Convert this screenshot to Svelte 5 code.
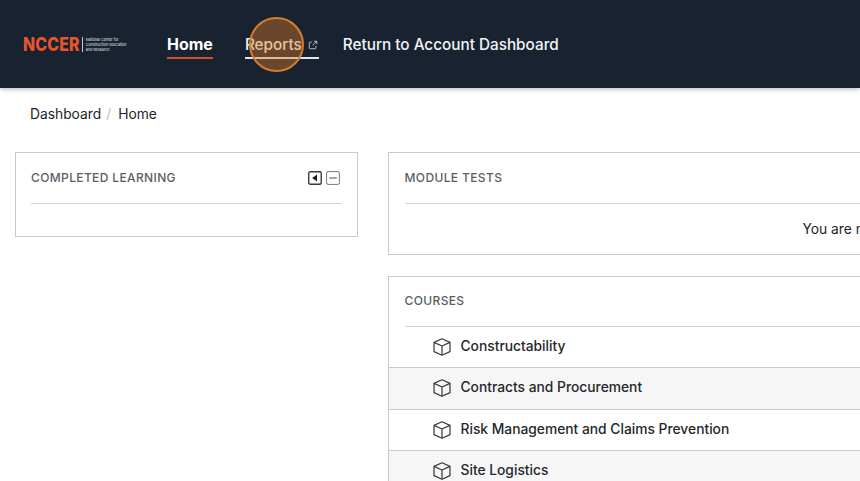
<script lang="ts">
  const courses = [
    "Constructability",
    "Contracts and Procurement",
    "Risk Management and Claims Prevention",
    "Site Logistics",
  ];
</script>

<div class="page">
  <header class="topbar">
    <a class="logo" href="#top">
      <span class="logo-mark"><span class="logo-word">NCCER</span></span>
      <span class="logo-text">National Center for<br />Construction Education<br />and Research</span>
    </a>
    <nav class="nav">
      <a class="nav-link active" href="#home">Home</a>
      <a class="nav-link reports" href="#reports">
        Reports
        <svg class="ext" viewBox="0 0 12 12" width="10" height="10" fill="none" stroke="currentColor" stroke-width="1">
          <path d="M9.5 7v2.5a1 1 0 0 1-1 1h-6a1 1 0 0 1-1-1v-6a1 1 0 0 1 1-1H5" />
          <path d="M7 1.5h3.5V5M10.5 1.5 5.5 6.5" />
        </svg>
        <span class="click-marker"></span>
      </a>
      <a class="nav-link" href="#return">Return to Account Dashboard</a>
    </nav>
  </header>

  <div class="breadcrumb">
    <span>Dashboard</span>
    <span class="sep">/</span>
    <span>Home</span>
  </div>

  <main class="columns">
    <section class="card left">
      <div class="card-head">
        <h2>COMPLETED LEARNING</h2>
        <div class="tools">
          <button class="tool" aria-label="Collapse sideways">
            <svg viewBox="0 0 14 14" width="14" height="14">
              <rect x="0.75" y="0.75" width="12.5" height="12.5" rx="1.5" fill="none" stroke="#3a3a3a" stroke-width="1.4" />
              <path d="M9 3.4v7.2L4.2 7z" fill="#1c1c1c" />
            </svg>
          </button>
          <button class="tool" aria-label="Minimize">
            <svg viewBox="0 0 14 14" width="14" height="14">
              <rect x="0.6" y="0.6" width="12.8" height="12.8" rx="1.5" fill="none" stroke="#777" stroke-width="1" />
              <path d="M3.2 7h7.6" stroke="#666" stroke-width="1.2" />
            </svg>
          </button>
        </div>
      </div>
    </section>

    <div class="right">
      <section class="card tests">
        <div class="card-head">
          <h2>MODULE TESTS</h2>
        </div>
        <p class="notice">You are not enrolled in any module tests</p>
      </section>

      <section class="card courses">
        <div class="card-head">
          <h2>COURSES</h2>
        </div>
        <ul class="course-list">
          {#each courses as course}
            <li class="course">
              <svg viewBox="1 1 14 14" width="18" height="18" fill="none" stroke="#3a3a3a" stroke-width="0.95" stroke-linejoin="round">
                <path d="M8 1.6 14.2 4.4v7.2L8 14.4 1.8 11.6V4.4z" />
                <path d="M1.8 4.4 8 7.2l6.2-2.8M8 7.2v7.2" />
              </svg>
              <span>{course}</span>
            </li>
          {/each}
        </ul>
      </section>
    </div>
  </main>
</div>

<style>
  :global(body) {
    margin: 0;
    background: #fff;
    overflow: hidden;
  }

  .page {
    width: 860px;
    height: 481px;
    overflow: hidden;
    font-family: Inter, "Liberation Sans", sans-serif;
    color: #1f2328;
  }

  .topbar {
    height: 88px;
    box-sizing: border-box;
    padding-left: 23px;
    display: flex;
    align-items: center;
    background: #182230;
    box-shadow: 0 1px 5px rgba(0, 0, 0, 0.3);
    position: relative;
  }

  .logo {
    width: 144px;
    display: flex;
    align-items: center;
    gap: 3px;
    text-decoration: none;
  }

  .logo-mark {
    padding-right: 2px;
    border-right: 1px solid #c9ccd0;
    line-height: 15px;
  }

  .logo-word {
    display: inline-block;
    font-size: 15.8px;
    font-weight: 800;
    letter-spacing: 0.2px;
    color: #e8552d;
    transform: scaleY(1.15);
  }

  .logo-text {
    font-size: 3.7px;
    line-height: 5px;
    color: #e4e6e9;
    white-space: nowrap;
  }

  .nav {
    display: flex;
    gap: 32px;
    align-items: center;
  }

  .nav-link {
    position: relative;
    display: flex;
    align-items: center;
    gap: 6px;
    height: 30px;
    box-sizing: border-box;
    padding-top: 2px;
    border-bottom: 2px solid transparent;
    font-size: 15.3px;
    font-weight: 500;
    color: #f1f3f5;
    text-decoration: none;
    white-space: nowrap;
  }

  .nav-link.active {
    font-size: 16px;
    font-weight: 700;
    color: #fff;
    border-bottom-color: #cf5229;
  }

  .nav-link.reports {
    border-bottom-color: #e2e6ea;
    padding-right: 1px;
    margin-right: -8px;
  }

  .ext {
    color: #cfd3d8;
    margin-top: 2px;
  }

  .click-marker {
    position: absolute;
    left: 4px;
    top: -12px;
    width: 51px;
    height: 51px;
    border-radius: 50%;
    border: 2px solid #d47f2e;
    background: rgba(222, 125, 40, 0.42);
  }

  .breadcrumb {
    display: flex;
    gap: 5px;
    padding: 17px 0 0 30px;
    height: 64px;
    box-sizing: border-box;
    font-size: 13.8px;
    line-height: 18px;
  }

  .sep {
    color: #b9bec4;
    margin-right: 2px;
  }

  .columns {
    display: flex;
    align-items: flex-start;
    gap: 30px;
    padding-left: 15px;
  }

  .card {
    box-sizing: border-box;
    border: 1px solid #c9c9c9;
    background: #fff;
  }

  .left {
    width: 343px;
    flex: none;
    padding: 0 15px;
    height: 85px;
  }

  .right {
    width: 1000px;
    flex: none;
    display: flex;
    flex-direction: column;
    gap: 21px;
  }

  .tests {
    padding: 0 15.5px;
    height: 103px;
  }

  .courses {
    padding: 0 0 0 15.5px;
  }

  .card-head {
    height: 51px;
    box-sizing: border-box;
    padding-bottom: 1px;
    display: flex;
    align-items: center;
    justify-content: space-between;
    border-bottom: 1px solid #d4d4d4;
  }

  .courses .card-head {
    height: 49.5px;
  }

  .card-head h2 {
    margin: 0;
    font-size: 12px;
    font-weight: 500;
    letter-spacing: 0.37px;
    color: #5a5e63;
  }

  .tools {
    display: flex;
    gap: 4px;
    margin-right: 2px;
  }

  .tool {
    padding: 0;
    border: 0;
    background: none;
    display: block;
    height: 14px;
  }

  .notice {
    margin: 0;
    padding: 16px 0 0 398px;
    font-size: 13.8px;
    line-height: 18px;
    white-space: nowrap;
  }

  .course-list {
    list-style: none;
    margin: 0 0 0 -15.5px;
    padding: 0;
  }

  .course {
    height: 41.5px;
    box-sizing: border-box;
    padding: 0 0 2px 43.5px;
    display: flex;
    align-items: center;
    gap: 10px;
    font-size: 13.8px;
    font-weight: 500;
    color: #24282d;
    border-bottom: 1px solid #c9c9c9;
  }

  .course svg {
    margin-top: 2px;
  }

  .course:nth-child(even) {
    background: #f6f6f6;
  }
</style>
